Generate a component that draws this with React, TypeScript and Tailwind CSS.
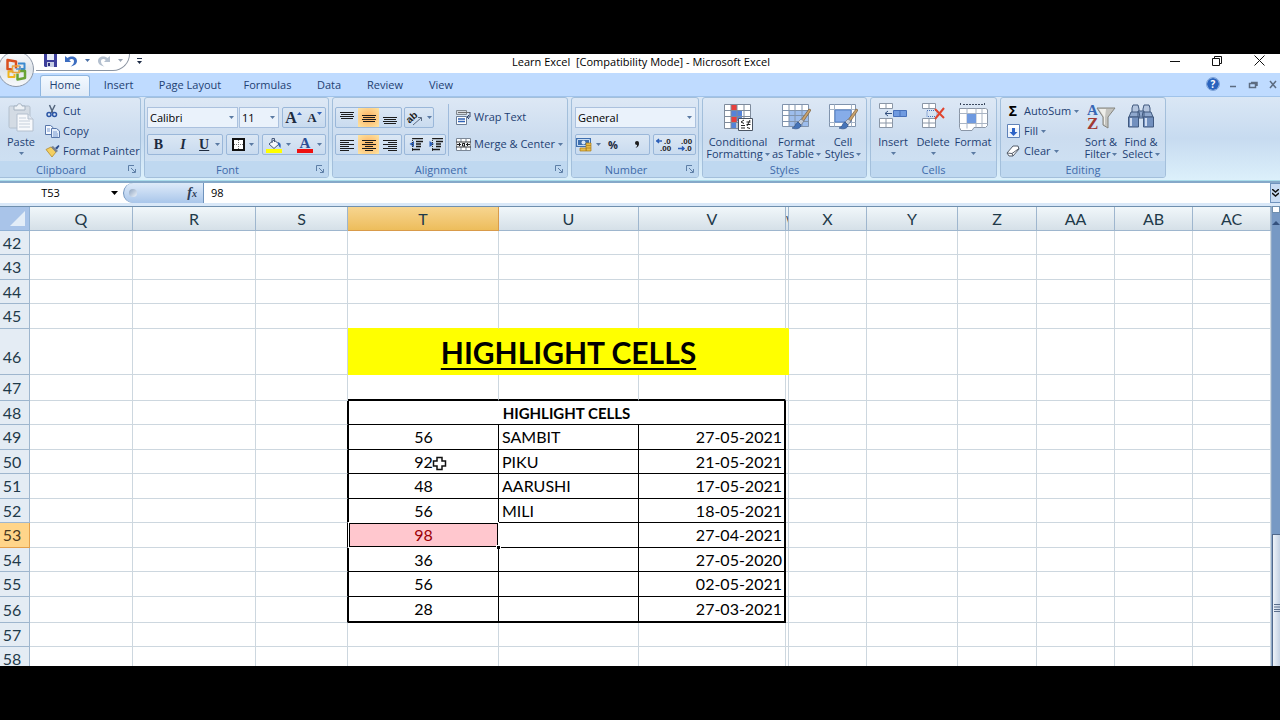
import type { ReactNode } from "react";
import clsx from "clsx";

const UI = "font-['Open_Sans',sans-serif]";
const CELL = "font-['Lato',sans-serif]";

/* ---------- small shared pieces ---------- */

function Arrow({ className = "" }: { className?: string }) {
  return (
    <svg viewBox="0 0 5 3" className={clsx("h-[3px] w-[5px] shrink-0", className)} aria-hidden="true">
      <path d="M0 0h5L2.500 3z" fill="currentColor" />
    </svg>
  );
}

function Launcher() {
  return (
    <button aria-label="More options" className="absolute right-1 top-1 size-2 text-[#5d7ea6]">
      <svg viewBox="0 0 8 8" className="size-2" fill="none" stroke="currentColor">
        <path d="M.5 6V.5H6M3 3l4 4M7.500 4v3.500H4" />
      </svg>
    </button>
  );
}

function Group({
  label,
  width,
  launcher = false,
  children,
}: {
  label: string;
  width: string;
  launcher?: boolean;
  children: ReactNode;
}) {
  return (
    <section
      className={clsx(
        "flex h-[81px] shrink-0 flex-col overflow-hidden rounded-[3px] border border-[#a3bfdb] bg-linear-to-b from-[#dde8f5] via-[#cbdcef] to-[#cfe2f4]",
        width,
      )}
    >
      <div className="flex flex-1">{children}</div>
      <div className={clsx("relative h-4 bg-[#bfd8f0] text-center leading-[17px] text-[#3e6aaa]", launcher && "pr-[18px]")}>
        {label}
        {launcher && <Launcher />}
      </div>
    </section>
  );
}

function Box({ children, className = "" }: { children: ReactNode; className?: string }) {
  return (
    <div
      className={clsx(
        "flex h-[21px] rounded-[2px] border border-[#9ab7d9] bg-linear-to-b from-[#dbe7f4] to-[#c9dbef]",
        className,
      )}
    >
      {children}
    </div>
  );
}

function Tool({
  label,
  active = false,
  arrow = false,
  children,
}: {
  label: string;
  active?: boolean;
  arrow?: boolean;
  children: ReactNode;
}) {
  return (
    <button
      aria-label={label}
      className={clsx(
        "flex flex-1 items-center justify-center gap-1 text-[#1d2b3f]",
        active && "bg-radial from-[#fbae5c] to-[#fde5a3]",
      )}
    >
      {children}
      {arrow && <Arrow className="text-[#5a7aa3]" />}
    </button>
  );
}

function Combo({ label, value, width }: { label: string; value: string; width: string }) {
  return (
    <div className={clsx("relative h-[21px]", width)}>
      <select
        aria-label={label}
        defaultValue={value}
        className="h-full w-full appearance-none border border-[#abc1de] bg-[#eaf2fb] pl-[2px] text-black"
      >
        <option>{value}</option>
      </select>
      <Arrow className="pointer-events-none absolute right-1 top-[9px] text-[#5a7aa3]" />
    </div>
  );
}

function RowButton({ icon, label, arrow = false }: { icon: ReactNode; label: string; arrow?: boolean }) {
  return (
    <button className="flex h-5 items-center gap-[3px] whitespace-nowrap">
      <span className="flex w-4 justify-center">{icon}</span>
      {label}
      {arrow && <Arrow className="text-[#5a7aa3]" />}
    </button>
  );
}

function BigButton({
  icon,
  lines,
  width,
  arrowBelow = false,
}: {
  icon: ReactNode;
  lines: string[];
  width: string;
  arrowBelow?: boolean;
}) {
  return (
    <button className={clsx("flex shrink-0 flex-col items-center pt-[5px] leading-3", width)}>
      <span className="mb-1 h-[29px]">{icon}</span>
      {lines.map((line, i) => (
        <span key={line} className="flex items-center gap-[2px] whitespace-nowrap">
          {line}
          {!arrowBelow && i === lines.length - 1 && <Arrow className="text-[#5a7aa3]" />}
        </span>
      ))}
      {arrowBelow && <Arrow className="mt-1 text-[#5a7aa3]" />}
    </button>
  );
}

/* ---------- icons ---------- */

function OfficeLogo() {
  return (
    <svg viewBox="0 0 24 24" className="size-6" fill="none" strokeLinejoin="round">
      <path d="M12 11.500V4.500L3.500 3v9l5 .5" stroke="#d9501f" strokeWidth="2.500" />
      <path d="M14 6.500h6.500v5.500h-4" stroke="#3b8ad0" strokeWidth="2" />
      <path d="M9.500 14.500h-5v5.500h6v-3" stroke="#f0b51f" strokeWidth="2" />
      <path d="M14.500 14h6.500v7l-7.500 1.500v-6" stroke="#69a436" strokeWidth="2.500" />
      <path d="M8.500 9h7v6.500h-7z" stroke="#eba23c" strokeWidth="1.500" />
      <path d="M12 12h4V9" stroke="#4f95d3" strokeWidth="1.500" />
    </svg>
  );
}

function SaveIcon() {
  return (
    <svg viewBox="0 0 13 13" className="size-[13px]">
      <path d="M0 0h13v13H1l-1-1z" fill="#3d3f9b" />
      <path d="M3 0h7v6H3z" fill="#e6ebf7" />
      <path d="M3 8h7v5H3z" fill="#c8cfe4" />
      <path d="M4 9h2v3H4z" fill="#2c2e7c" />
    </svg>
  );
}

function UndoIcon({ flip = false }: { flip?: boolean }) {
  return (
    <svg viewBox="0 0 12 12" className={clsx("size-3", flip && "-scale-x-100")}>
      <path
        d="M0 1v6h6L4.200 5C6 3.500 9 3.500 9 6.500 9 9 7 10.500 5.500 11.500 9 11 12 9 12 6 12 2 7 0 2.500 3z"
        fill={flip ? "#b4c0cf" : "#3c6dc0"}
      />
    </svg>
  );
}

function PasteIcon() {
  return (
    <svg viewBox="0 0 26 29" className="h-[29px] w-[26px]">
      <rect x="1" y="3" width="21" height="22" rx="1.500" fill="#d3dbe4" stroke="#b3c0ce" />
      <path d="M6 3h3c0-3 5-3 5 0h3v4H6z" fill="#eef2f6" stroke="#a5b2c0" />
      <path d="M9 11h11l5 5v12H9z" fill="#f7f9fc" stroke="#b3bfce" />
      <path d="M20 11v5h5" fill="#dfe6ef" stroke="#b3bfce" />
      <path d="M11 15h7M11 18h11M11 21h11M11 24h11" stroke="#c5cfdb" />
    </svg>
  );
}

function CutIcon() {
  return (
    <svg viewBox="0 0 12 14" className="h-[14px] w-3" fill="none">
      <path d="M3.500 1 7 9M9 1 5 9" stroke="#54657c" strokeWidth="1.500" />
      <circle cx="3" cy="10.500" r="2" stroke="#2d57a6" strokeWidth="1.500" />
      <circle cx="8.500" cy="10.500" r="2" stroke="#2d57a6" strokeWidth="1.500" />
    </svg>
  );
}

function CopyIcon() {
  return (
    <svg viewBox="0 0 15 13" className="h-[13px] w-[15px]" stroke="#5877aa">
      <path d="M.5.500h5l2.500 2v7H.5z" fill="#f5f9ff" />
      <path d="M6.500 3.500h5l3 2.500v6.500h-8z" fill="#e3edfb" />
      <path d="M2 4h3M2 6h3M8 7h4M8 9h5M8 11h5" stroke="#7b9bd0" />
    </svg>
  );
}

function PainterIcon() {
  return (
    <svg viewBox="0 0 15 14" className="h-[14px] w-[15px]">
      <path d="M1 5.500 6 3l5 5-4 5z" fill="#f3cf62" stroke="#b28a2c" strokeWidth=".8" />
      <path d="M6 3l2-1 5 5-2 1.500z" fill="#7a8391" />
      <path d="m10 4 3.500-3 1 1L12 5.500z" fill="#2f4d8a" />
    </svg>
  );
}

function FillColorIcon() {
  return (
    <svg viewBox="0 0 16 16" className="size-4">
      <path d="M3 7l5-4 5 4-5 4.500z" fill="#f4f8fd" stroke="#47597a" />
      <path d="M6 6V1.500h2.500V5" fill="none" stroke="#47597a" />
      <path d="M12 5c3 1 3 3 2.500 6-1.500-1-2-3-2.500-4z" fill="#2f62b5" />
      <path d="M0 12h16v4H0z" fill="#ff0" />
    </svg>
  );
}

function FontColorIcon() {
  return (
    <span className="flex h-4 w-4 flex-col items-center border-b-4 border-[#ee1111] font-['Liberation_Serif',serif] text-[15px] font-bold leading-[13px] text-[#2c4f96]">
      A
    </span>
  );
}

function Lines({ rows }: { rows: [number, number, number][] }) {
  return (
    <svg viewBox="0 0 14 12" className="h-3 w-[14px]" shapeRendering="crispEdges">
      {rows.map(([x, y, w]) => (
        <rect key={y} x={x} y={y} width={w} height="1" fill="#1c1c1c" />
      ))}
    </svg>
  );
}

const TOP: [number, number, number][] = [[0, 0, 14], [1, 2, 12], [0, 4, 14], [1, 6, 12]];
const MIDDLE: [number, number, number][] = [[0, 3, 14], [1, 5, 12], [0, 7, 14], [1, 9, 12]];
const BOTTOM: [number, number, number][] = [[0, 5, 14], [1, 7, 12], [0, 9, 14], [1, 11, 12]];
const LEFT: [number, number, number][] = [[0, 1, 14], [0, 3, 9], [0, 5, 14], [0, 7, 9], [0, 9, 14], [0, 11, 9]];
const CENTER: [number, number, number][] = [[0, 1, 14], [3, 3, 8], [0, 5, 14], [3, 7, 8], [0, 9, 14], [3, 11, 8]];
const RIGHT: [number, number, number][] = [[0, 1, 14], [5, 3, 9], [0, 5, 14], [5, 7, 9], [0, 9, 14], [5, 11, 9]];

function IndentIcon({ back = false }: { back?: boolean }) {
  return (
    <svg viewBox="0 0 15 13" className="h-[13px] w-[15px]">
      <path d="M4 .5h11M8 3.500h7M8 6h5M8 8.500h5M4 11.500h8" stroke="#1c1c1c" strokeWidth="1.500" />
      <path d={back ? "M6 3v6L1.500 6z" : "M1.500 3v6L6 6z"} fill="#2c5fb8" />
      <path d="M4.500 0v13" stroke="#333" strokeDasharray="1 1" />
    </svg>
  );
}

function OrientationIcon() {
  return (
    <svg viewBox="0 0 16 16" className="size-4 overflow-visible">
      <text x="0" y="11" transform="rotate(-42 5 9)" fontSize="10" fontWeight="700" fontFamily="Liberation Sans, sans-serif" fill="#1c1c1c">
        ab
      </text>
      <path d="M6 15 14 8M11 7.500h3.500v3.500" fill="none" stroke="#5a6b83" />
    </svg>
  );
}

function WrapIcon() {
  return (
    <svg viewBox="0 0 15 15" className="size-[15px]" fill="none">
      <path d="M.5.500h10v4H.5z" fill="#d5dae0" stroke="#808890" />
      <path d="M.5 6.500h10v8H.5z" fill="#fff" stroke="#6b7d96" />
      <path d="M2 2.500h12" stroke="#6e6e6e" />
      <path d="M2 9h7M2 11.500h7" stroke="#2f62b5" strokeWidth="1.500" />
      <path d="M14 2v5h-2M13 5l-2 2 2 2" stroke="#34466a" />
    </svg>
  );
}

function MergeIcon() {
  return (
    <svg viewBox="0 0 15 13" className="h-[13px] w-[15px]">
      <path d="M.5.500h14v12H.5zM5 .5V4M10 .5V4M5 9v3.500M10 9v3.500" fill="#fff" stroke="#7b8796" />
      <path d="M0 4h15v5H0z" fill="#f2f4f7" stroke="#3d3d3d" />
      <path d="M1 6.500h4M10 6.500h4M3.500 5v3M11.500 5v3" stroke="#1c1c1c" />
      <path d="M6.500 5.500h2v2.500h-2zM8.500 5v3.500" fill="none" stroke="#1c1c1c" />
    </svg>
  );
}

function MoneyIcon() {
  return (
    <svg viewBox="0 0 16 15" className="h-[15px] w-4">
      <path d="M0 1h15v9H0z" fill="#3f6fae" />
      <path d="M1.500 2.500h12v6h-12z" fill="none" stroke="#c8dcf2" />
      <circle cx="7.500" cy="5.500" r="2" fill="#d9e7f6" />
      <path d="M10 6h5v8h-5z" fill="#e8bd4b" stroke="#a87a1b" strokeWidth=".7" />
      <path d="M4 11h6v3H4zM10 8.500h5M10 11h5" fill="#e8bd4b" stroke="#a87a1b" strokeWidth=".7" />
    </svg>
  );
}

function DecimalIcon({ more = false }: { more?: boolean }) {
  return (
    <svg
      viewBox="0 0 16 15"
      className="h-[15px] w-4 overflow-visible"
      fontSize="8"
      fontWeight="700"
      fontFamily="Liberation Sans, sans-serif"
      fill="#1c1c1c"
    >
      <text x={more ? 8 : 4} y="7">{more ? ".0" : ".00"}</text>
      <text x={more ? 4 : 8} y="14">{more ? ".00" : ".0"}</text>
      <path d={more ? "M0 4h6M3 2 1 4l2 2" : "M1 11.500h6M5 9.500l2 2-2 2"} fill="none" stroke="#2c5fb8" strokeWidth="1.500" />
    </svg>
  );
}

function Brush() {
  return (
    <g>
      <path d="M27 6 19 17l2 2 8-12z" fill="#c8a36f" stroke="#7a5a33" strokeWidth=".7" />
      <path d="m19 16-3 3 3 3 3-4z" fill="#c5ccd6" stroke="#6b7686" strokeWidth=".7" />
      <path d="M16 19c-3 1-2 5-6 6 5 2 9 0 9-3z" fill="#4674b8" stroke="#2f5289" strokeWidth=".7" />
    </g>
  );
}

function ConditionalIcon() {
  return (
    <svg viewBox="0 0 29 28" className="h-7 w-[29px]">
      <path d="M.5 1.500h26v24H.5z" fill="#fff" />
      <path d="M7 1h6v6H7zM7 13h6v6H7z" fill="#e8403c" />
      <path d="M7 7h11v6H7zM13 13h5v5h-5zM7 19h5v6H7z" fill="#5583d8" />
      <path d="M.5 1.500h26v24H.5zM.5 7.500h26M.5 13.500h26M.5 19.500h26M7 1.500v24M13 1.500v24M20 1.500v24" fill="none" stroke="#7e8b9c" />
      <path d="M14.500 15.500h14v12h-14z" fill="#fff" stroke="#4a5462" />
      <path d="m20 17-3 2 3 1.500M17 22.500h4M17 25h4M22.500 19h4M22.500 21.500h4M26 17l-3 6M23 24.500l3 1" stroke="#222" fill="none" />
    </svg>
  );
}

function FormatTableIcon() {
  return (
    <svg viewBox="0 0 29 28" className="h-7 w-[29px]">
      <path d="M.5 1.500h26v22H.5z" fill="#fff" />
      <path d="M7 7h20v17H7z" fill="#9dbdec" />
      <path d="M.5 1.500h26v22H.5zM.5 7.500h26M.5 12.500h26M.5 18.500h26M7 1.500v22M13 1.500v22M20 1.500v22" fill="none" stroke="#8093ac" />
      <Brush />
    </svg>
  );
}

function CellStylesIcon() {
  return (
    <svg viewBox="0 0 29 28" className="h-7 w-[29px]">
      <path d="M.5 1.500h26v22H.5z" fill="#fff" stroke="#8093ac" />
      <path d="M.5 6.500h26M.5 19.500h26M5.500 1.500v22M22.500 1.500v22" stroke="#a6b4c6" />
      <path d="M6 7h16v12H6z" fill="#86ace9" stroke="#5580c5" />
      <Brush />
    </svg>
  );
}

function InsertIcon() {
  return (
    <svg viewBox="0 0 28 26" className="h-[26px] w-7" fill="#fff" stroke="#8a96a6">
      <path d="M.5.500h13v5H.5zM7 .5v5M.5 15.500h13v9H.5zM7 15.500v9M.5 20h13" />
      <path d="M14.500 7.500h13v6h-13zM21 7.500v6" fill="#6f9ae0" stroke="#4770ba" />
      <path d="M13 10.500H6M9 8l-3 2.500L9 13" fill="none" stroke="#33507d" />
    </svg>
  );
}

function DeleteIcon() {
  return (
    <svg viewBox="0 0 26 26" className="size-[26px]" fill="#fff" stroke="#8a96a6">
      <path d="M2.500.500h13v5h-13zM9 .5v5M2.500 15.500h13v9h-13zM9 15.500v9M2.500 20h13" />
      <path d="M7 7.500h10v6H7z" strokeDasharray="1 1" stroke="#4770ba" fill="none" />
      <path d="m15 6 9 9M24 5l-9 11" stroke="#e0452f" strokeWidth="2" />
    </svg>
  );
}

function FormatIcon() {
  return (
    <svg viewBox="0 0 29 28" className="h-7 w-[29px]">
      <path d="M1.500 0v3M25.500 0v3M4 1.500h20" stroke="#3c4b60" strokeDasharray="2 1" />
      <path d="M.5 5.500h26l2 1v16l-2 2H15l-2 3H2l-1.500-3z" fill="#fff" stroke="#8a96a6" />
      <path d="M.5 10.500h28M.5 20.500h28M8 5.500v20M17 5.500v19M23 5.500v19" stroke="#aab5c4" />
      <path d="M8 11h9v9H8z" fill="#6f9ae0" />
    </svg>
  );
}

function FillIcon() {
  return (
    <svg viewBox="0 0 13 14" className="h-[14px] w-[13px]">
      <path d="M.5.500h12v13H.5z" fill="#eef4fc" stroke="#5f82b8" />
      <path d="M1 1h11v3H1z" fill="#fff" />
      <path d="M5 4h3v4h2.500l-4 4-4-4H5z" fill="#2d63c6" />
    </svg>
  );
}

function ClearIcon() {
  return (
    <svg viewBox="0 0 14 12" className="h-3 w-[14px]" stroke="#545d6a">
      <path d="m1 8 6-7h5l1 3-6 7H3z" fill="#fff" />
      <path d="m1 8 5 .5 7-5M6 8.500 7 11" fill="none" />
    </svg>
  );
}

function SortIcon() {
  return (
    <svg viewBox="0 0 28 28" className="size-7 overflow-visible" fontFamily="Liberation Serif, serif" fontWeight="700">
      <path d="M10 5h18l-7 9v11l-5-3v-8z" fill="#c4c4c0" stroke="#85857f" />
      <path d="M12 6h7l-1 8v8l-1-1v-7z" fill="#eeeeea" />
      <text x="0" y="12" fontSize="15" fill="#3767b4">A</text>
      <text x="0" y="26" fontSize="17" fill="#a13a34">Z</text>
    </svg>
  );
}

function FindIcon() {
  return (
    <svg viewBox="0 0 28 26" className="h-[26px] w-7" fill="#7290be" stroke="#40597f">
      <path d="M6 2h5l1 4v4H5V5zM17 2h5l1 3v5h-7V6z" fill="#b5c6df" />
      <path d="M4 9h8l1 5H2zM16 9h8l2 5H15zM11 8h6v7h-6z" fill="#8fa8cd" />
      <path d="M1.500 14h10v10h-10zM16.500 14h10v10h-10z" />
      <path d="M4 15v8M19 15v8" stroke="#cfdcf0" strokeWidth="2" />
    </svg>
  );
}

/* ---------- window chrome ---------- */

function TitleBar() {
  return (
    <header className="flex h-[19px] shrink-0 items-start bg-white text-black">
      <div className="flex w-[126px] shrink-0 items-start">
        <div className="ml-9 flex h-[17px] w-[94px] shrink-0 items-center rounded-br-full border-b border-r border-[#8d96a3] pb-[3px] pl-2">
          <button aria-label="Save"><SaveIcon /></button>
          <button aria-label="Undo" className="ml-2"><UndoIcon /></button>
          <Arrow className="ml-2 text-[#4a6fa5]" />
          <button aria-label="Redo" className="ml-2"><UndoIcon flip /></button>
          <Arrow className="ml-2 text-[#9aa5b3]" />
        </div>
        <button aria-label="Customize toolbar" className="ml-[7px] mt-1 border-t border-[#1d2b45] pt-[2px]">
          <Arrow className="text-[#1d2b45]" />
        </button>
      </div>
      <h1 className="flex-1 whitespace-pre pl-[2px] text-center leading-[15px]">Learn Excel  [Compatibility Mode] - Microsoft Excel</h1>
      <div className="flex w-[126px] shrink-0">
        {[
          { label: "Minimize", d: "M0 6.500h10" },
          { label: "Restore", d: "M.5 3.500h7v7h-7zM2.500 3V1.500h7v7H8" },
          { label: "Close", d: "M.5.500l10 10M10.500.500l-10 10" },
        ].map(({ label, d }) => (
          <button key={label} aria-label={label} className="flex h-[13px] w-[42px] items-center justify-center">
            <svg viewBox="0 0 11 11" className="size-[11px]" fill="none" stroke="#111">
              <path d={d} />
            </svg>
          </button>
        ))}
      </div>
    </header>
  );
}

const TABS = [
  { name: "Insert", width: "w-[55px]" },
  { name: "Page Layout", width: "w-[88px]" },
  { name: "Formulas", width: "w-[67px]" },
  { name: "Data", width: "w-14" },
  { name: "Review", width: "w-14" },
  { name: "View", width: "w-14" },
];

function TabBar() {
  return (
    <nav className="flex h-[23px] shrink-0 items-end bg-[#bfdbff] pl-10">
      <button className="mr-px h-[21px] w-[50px] rounded-t-[3px] border border-b-0 border-[#8fb6e0] bg-linear-to-b from-[#f3f9ff] to-[#dfeaf7] pb-[3px]">
        Home
      </button>
      {TABS.map(({ name, width }) => (
        <button key={name} className={clsx("h-[21px] pb-[2px]", width)}>{name}</button>
      ))}
      <div className="-mr-[3px] ml-auto flex h-[21px] items-center pb-[3px]">
        <button aria-label="Help" className="mr-1 flex size-3 items-center justify-center rounded-full bg-[#2a63bd] text-[10px] font-bold leading-3 text-white outline outline-[#7ba0d6]">
          ?
        </button>
        {[
          { label: "Minimize workbook", d: "M2 7.500h6" },
          { label: "Restore workbook", d: "M1.500 4.500h6v4h-6zM3 3.500h6V7" },
          { label: "Close workbook", d: "m2 2 6 7M8 2 2 9" },
        ].map(({ label, d }) => (
          <button key={label} aria-label={label} className="flex w-5 justify-center">
            <svg viewBox="0 0 10 10" className="size-[10px]" fill="none" stroke="#5c6b80" strokeWidth="1.500">
              <path d={d} />
            </svg>
          </button>
        ))}
      </div>
    </nav>
  );
}

function Ribbon() {
  return (
    <div className="flex h-[85px] shrink-0 gap-[3px] overflow-hidden border-b border-t border-b-[#a9dcea] border-t-[#a0c3ea] bg-linear-to-b from-[#dae7f5] via-[#c7dbf0] to-[#dcf0fb]">
      <Group label="Clipboard" width="w-[141px] rounded-l-none border-l-0" launcher>
        <BigButton icon={<PasteIcon />} lines={["Paste"]} width="w-[42px]" arrowBelow />
        <div className="flex flex-col pl-[2px] pt-[3px]">
          <RowButton icon={<CutIcon />} label="Cut" />
          <RowButton icon={<CopyIcon />} label="Copy" />
          <RowButton icon={<PainterIcon />} label="Format Painter" />
        </div>
      </Group>

      <Group label="Font" width="w-[185px]" launcher>
        <div className="flex flex-1 flex-col gap-[6px] px-[2px] pt-[9px]">
          <div className="flex gap-[1px]">
            <Combo label="Font name" value="Calibri" width="w-[91px]" />
            <Combo label="Font size" value="11" width="w-10" />
            <Box className="ml-[2px] w-[44px] font-['Liberation_Serif',serif] font-bold">
              <Tool label="Grow font">
                <span className="text-[16px]">A</span>
                <Arrow className="-ml-1 mb-2 rotate-180 text-[#2c5fb8]" />
              </Tool>
              <Tool label="Shrink font">
                <span className="text-[13px]">A</span>
                <Arrow className="-ml-1 mb-2 text-[#2c5fb8]" />
              </Tool>
            </Box>
          </div>
          <div className="flex gap-[3px]">
            <Box className="w-[76px] font-['Liberation_Serif',serif] text-[14px] font-bold">
              <Tool label="Bold"><span className="mr-1">B</span></Tool>
              <Tool label="Italic"><span className="mr-1 italic">I</span></Tool>
              <Tool label="Underline" arrow><span className="mr-[2px] underline">U</span></Tool>
            </Box>
            <Box className="w-[33px]">
              <Tool label="Borders" arrow>
                <svg viewBox="0 0 13 13" className="size-[13px]">
                  <path d="M1 1h11v11H1z" fill="#fff" stroke="#111" strokeWidth="2" />
                  <path d="M6.500 2v9M2 6.500h9" stroke="#777" strokeDasharray="1 1" />
                </svg>
              </Tool>
            </Box>
            <Box className="w-16">
              <Tool label="Fill color" arrow><FillColorIcon /></Tool>
              <Tool label="Font color" arrow><FontColorIcon /></Tool>
            </Box>
          </div>
        </div>
      </Group>

      <Group label="Alignment" width="w-[236px]" launcher>
        <div className="flex flex-col gap-[6px] pl-[2px] pt-[9px]">
          <div className="flex gap-[2px]">
            <Box className="w-[67px]">
              <Tool label="Top align"><Lines rows={TOP} /></Tool>
              <Tool label="Middle align" active><Lines rows={MIDDLE} /></Tool>
              <Tool label="Bottom align"><Lines rows={BOTTOM} /></Tool>
            </Box>
            <Box className="w-[30px]">
              <Tool label="Orientation" arrow><OrientationIcon /></Tool>
            </Box>
          </div>
          <div className="flex gap-[2px]">
            <Box className="w-[67px]">
              <Tool label="Align left"><Lines rows={LEFT} /></Tool>
              <Tool label="Center" active><Lines rows={CENTER} /></Tool>
              <Tool label="Align right"><Lines rows={RIGHT} /></Tool>
            </Box>
            <Box className="w-[42px]">
              <Tool label="Decrease indent"><IndentIcon back /></Tool>
              <Tool label="Increase indent"><IndentIcon /></Tool>
            </Box>
          </div>
        </div>
        <div className="ml-[2px] mt-[6px] h-[52px] border-l border-[#9fbbdc]" />
        <div className="flex flex-col gap-[7px] pl-[6px] pt-[9px]">
          <RowButton icon={<WrapIcon />} label="Wrap Text" />
          <RowButton icon={<MergeIcon />} label="Merge & Center" arrow />
        </div>
      </Group>

      <Group label="Number" width="w-32" launcher>
        <div className="flex flex-1 flex-col gap-[6px] px-[3px] pt-[9px]">
          <Combo label="Number format" value="General" width="w-full" />
          <div className="flex gap-[3px]">
            <Box className="w-[75px]">
              <Tool label="Accounting format" arrow><MoneyIcon /></Tool>
              <Tool label="Percent style"><span className="font-bold">%</span></Tool>
              <Tool label="Comma style">
                <svg viewBox="0 0 4 7" className="h-[7px] w-1" fill="#1c1c1c">
                  <circle cx="2" cy="2" r="2" />
                  <path d="M4 2c0 3-1 4-3.500 5C2 5.500 2.300 4.500 2 3z" />
                </svg>
              </Tool>
            </Box>
            <Box className="w-[43px]">
              <Tool label="Increase decimal"><DecimalIcon more /></Tool>
              <Tool label="Decrease decimal"><DecimalIcon /></Tool>
            </Box>
          </div>
        </div>
      </Group>

      <Group label="Styles" width="w-[165px]">
        <BigButton icon={<ConditionalIcon />} lines={["Conditional", "Formatting"]} width="ml-[3px] w-16" />
        <BigButton icon={<FormatTableIcon />} lines={["Format", "as Table"]} width="w-[53px]" />
        <BigButton icon={<CellStylesIcon />} lines={["Cell", "Styles"]} width="w-10" />
      </Group>

      <Group label="Cells" width="w-[127px]">
        <BigButton icon={<InsertIcon />} lines={["Insert"]} width="ml-[2px] w-10" arrowBelow />
        <BigButton icon={<DeleteIcon />} lines={["Delete"]} width="w-10" arrowBelow />
        <BigButton icon={<FormatIcon />} lines={["Format"]} width="w-10" arrowBelow />
      </Group>

      <Group label="Editing" width="w-[166px]">
        <div className="flex w-20 flex-col pl-1 pt-[3px]">
          <RowButton icon={<span className="text-[14px] font-bold text-black">Σ</span>} label="AutoSum" arrow />
          <RowButton icon={<FillIcon />} label="Fill" arrow />
          <RowButton icon={<ClearIcon />} label="Clear" arrow />
        </div>
        <BigButton icon={<SortIcon />} lines={["Sort &", "Filter"]} width="w-10" />
        <BigButton icon={<FindIcon />} lines={["Find &", "Select"]} width="w-10" />
      </Group>
    </div>
  );
}

function FormulaBar() {
  return (
    <div className="flex h-[25px] shrink-0 border-b-[3px] border-t-2 border-b-[#d9e8f8] border-t-[#86a9c9] bg-white text-black">
      <input aria-label="Name box" defaultValue="T53" className="w-[101px] shrink-0 text-center" />
      <button aria-label="Show names" className="flex w-[26px] shrink-0 items-center justify-center">
        <svg viewBox="0 0 7 4" className="h-1 w-[7px]"><path d="M0 0h7L3.500 4z" /></svg>
      </button>
      <div className="-ml-1 flex w-[81px] shrink-0 items-center justify-between rounded-l-full border-l border-r border-[#6f93bd] bg-linear-to-b from-[#dfebf9] to-[#a9c6ea] pl-[5px] pr-[6px]">
        <span className="size-2 rounded-full bg-linear-to-br from-[#8ea4c0] to-[#eef4fb]" />
        <button aria-label="Insert function" className="font-['Liberation_Serif',serif] text-[14px] font-bold italic leading-4 text-[#2c3c55]">
          f<span className="text-[10px]">x</span>
        </button>
      </div>
      <input aria-label="Formula" defaultValue="98" className="min-w-0 flex-1 pl-[7px]" />
      <button aria-label="Expand formula bar" className="flex w-[10px] shrink-0 items-center justify-center border border-r-0 border-[#6f93bd] bg-[#c9dcf3]">
        <svg viewBox="0 0 7 8" className="h-2 w-[7px]" fill="none" stroke="#111" strokeWidth="1.500">
          <path d="m0 0 3.500 3L7 0M0 4l3.500 3L7 4" />
        </svg>
      </button>
    </div>
  );
}

/* ---------- sheet ---------- */

const COLUMNS = [
  { name: "Q", width: 103 },
  { name: "R", width: 123 },
  { name: "S", width: 92 },
  { name: "T", width: 151 },
  { name: "U", width: 140 },
  { name: "V", width: 147 },
  { name: "W", width: 3 },
  { name: "X", width: 78 },
  { name: "Y", width: 91 },
  { name: "Z", width: 79 },
  { name: "AA", width: 78 },
  { name: "AB", width: 78 },
  { name: "AC", width: 78 },
];

const ROWS = [
  { n: 42, height: 24 },
  { n: 43, height: 25 },
  { n: 44, height: 24 },
  { n: 45, height: 25 },
  { n: 46, height: 46 },
  { n: 47, height: 26 },
  { n: 48, height: 24 },
  { n: 49, height: 25, data: ["56", "SAMBIT", "27-05-2021"] },
  { n: 50, height: 24, data: ["92", "PIKU", "21-05-2021"] },
  { n: 51, height: 25, data: ["48", "AARUSHI", "17-05-2021"] },
  { n: 52, height: 24, data: ["56", "MILI", "18-05-2021"] },
  { n: 53, height: 25, data: ["98", "", "27-04-2021"] },
  { n: 54, height: 24, data: ["36", "", "27-05-2020"] },
  { n: 55, height: 25, data: ["56", "", "02-05-2021"] },
  { n: 56, height: 26, data: ["28", "", "27-03-2021"] },
  { n: 57, height: 24 },
  { n: 58, height: 25 },
];

const GRID = "border-b border-r border-[#cdd7df]";

function CrossCursor() {
  return (
    <svg viewBox="0 0 15 15" className="absolute left-[83px] top-[6px] size-[15px]" aria-hidden="true">
      <path d="M5 1.500h5V5h3.500v5H10v3.500H5V10H1.500V5H5z" fill="#fff" stroke="#111" strokeWidth="1.500" />
    </svg>
  );
}

function DataCells({ n, data }: { n: number; data: string[] }) {
  const [score, name, date] = data;
  const selected = n === 53;
  const bottom = n === 56 ? "border-b-2" : "border-b";
  return (
    <>
      <td className={clsx("relative border-l border-r border-black text-center", bottom, selected && "bg-[#ffc7ce] text-[#9c0006]")}>
        {score}
        {n === 50 && <CrossCursor />}
        {selected && (
          <>
            <span className="absolute inset-0 border border-black outline outline-white" />
            <span className="absolute -bottom-[3px] -right-[3px] size-[5px] border border-white bg-black" />
          </>
        )}
      </td>
      <td className={clsx("border-r border-black pl-[3px]", bottom)}>{name}</td>
      <td className={clsx("border-r-2 border-black pr-[2px] text-right", bottom)}>{date}</td>
    </>
  );
}

function RowCells({ n, data }: { n: number; data?: string[] }) {
  const inTable = n >= 48 && n <= 56;
  const blank = (names: string[], extra = "") =>
    names.map((name) => <td key={name} className={clsx(GRID, extra)} />);

  let middle: ReactNode;
  if (n === 46) {
    middle = (
      <td colSpan={4} className="bg-[#ffff00] text-center text-[30px] font-bold leading-10 underline decoration-2 underline-offset-4">
        HIGHLIGHT CELLS
      </td>
    );
  } else if (n === 48) {
    middle = (
      <>
        <td colSpan={3} className="border-b border-l border-r-2 border-black text-center text-[15px] font-bold">
          HIGHLIGHT CELLS
        </td>
        {blank(["W"])}
      </>
    );
  } else if (data) {
    middle = (
      <>
        <DataCells n={n} data={data} />
        {blank(["W"])}
      </>
    );
  } else if (n === 47) {
    middle = (
      <>
        {blank(["T", "U", "V"], "border-b-2 border-b-black")}
        {blank(["W"])}
      </>
    );
  } else {
    middle = blank(["T", "U", "V", "W"], n === 45 ? "border-b-[#ffff00]" : "");
  }

  return (
    <>
      {blank(["Q", "R"])}
      {blank(["S"], inTable ? "border-r-black" : "")}
      {middle}
      {blank(["X", "Y", "Z", "AA", "AB", "AC"])}
    </>
  );
}

function Sheet() {
  return (
    <div className={clsx("flex min-h-0 flex-1 overflow-hidden bg-white text-[16px] leading-5", CELL)}>
      <div className="min-w-0 flex-1 overflow-hidden">
        <table className="w-full table-fixed border-separate border-spacing-0 border-t border-[#6f8fae] text-black">
          <colgroup>
            <col className="w-[30px]" />
            {COLUMNS.map(({ name, width }) => (
              <col key={name} style={{ width }} />
            ))}
          </colgroup>
          <thead>
            <tr className="h-6 text-[#1f3a4a]">
              <th className="border-b border-r border-[#8fb0d4] bg-[#a9c4e9] p-0" aria-label="Select all">
                <svg viewBox="0 0 15 15" className="ml-auto mr-1 size-[15px]">
                  <path d="M15 0v15H0z" fill="#e3edf8" />
                </svg>
              </th>
              {COLUMNS.map(({ name }) => (
                <th
                  key={name}
                  className={clsx(
                    "overflow-hidden border-b border-r p-0 font-normal",
                    name === "T"
                      ? "border-[#d99b4a] bg-linear-to-b from-[#f7d58f] to-[#edbd5b]"
                      : "border-[#9eb6ce] bg-linear-to-b from-[#f1f7fa] to-[#d5e0e8]",
                  )}
                >
                  {name === "W" ? <span className="block w-[2px] overflow-hidden text-[10px] leading-4">W</span> : name}
                </th>
              ))}
            </tr>
          </thead>
          <tbody>
            {ROWS.map(({ n, height, data }) => (
              <tr key={n} style={{ height }}>
                <th
                  className={clsx(
                    "border-b border-r p-0 pr-[5px] text-center font-normal",
                    n === 46 && "pt-[10px]",
                    n === 53
                      ? "border-[#e3a04c] bg-[#ffd58a] text-[#4a3a20]"
                      : "border-[#9eb6ce] bg-[#e4ecf4] text-[#1f3a4a]",
                  )}
                >
                  {n}
                </th>
                <RowCells n={n} data={data} />
              </tr>
            ))}
          </tbody>
        </table>
      </div>
      <div className="flex w-[9px] shrink-0 flex-col border-l border-[#8fa9c8] bg-[#7799c4]">
        <div className="h-[7px] border border-[#6f8fae] bg-white" />
        <button aria-label="Scroll up" className="flex h-5 items-center justify-end">
          <svg viewBox="0 0 8 4" className="h-1 w-2"><path d="M0 4 4 0l4 4z" fill="#34517d" /></svg>
        </button>
        <div className="flex-[313]" />
        <button
          aria-label="Scroll thumb"
          className="flex flex-[120] items-center justify-end border-l border-t border-[#50698c] bg-linear-to-r from-[#eef3f9] to-[#c3d1e3] pt-4"
        >
          <svg viewBox="0 0 6 8" className="h-2 w-[6px]" stroke="#5b6f8c">
            <path d="M0 .5h6M0 3h6M0 5.500h6M0 7.500h6" />
          </svg>
        </button>
      </div>
    </div>
  );
}

export default function App() {
  return (
    <div className="h-screen bg-black py-[54px]">
      <main className={clsx("relative flex h-full flex-col overflow-hidden bg-[#d9e8f8] text-[11px] leading-4 text-[#1e4173]", UI)}>
        <TitleBar />
        <TabBar />
        <Ribbon />
        <FormulaBar />
        <Sheet />
        <button
          aria-label="Office button"
          className="absolute -left-[2px] -top-[3px] flex size-9 items-center justify-center rounded-full border border-[#8d98a8] bg-linear-to-b from-[#fbfcfd] via-[#dfe4ea] to-[#f7f9fb]"
        >
          <OfficeLogo />
        </button>
      </main>
    </div>
  );
}
